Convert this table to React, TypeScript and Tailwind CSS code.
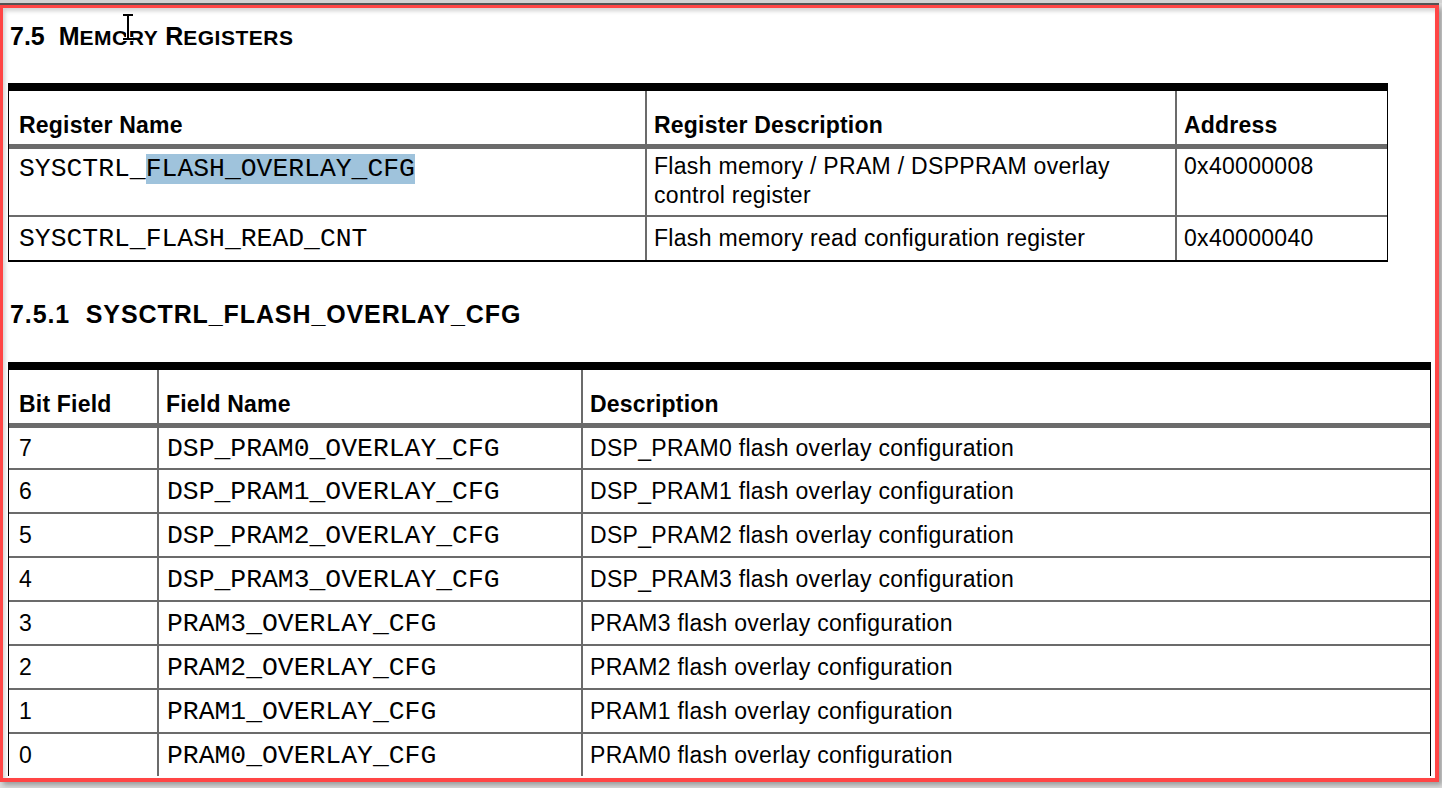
const sans = "font-['Liberation_Sans',Arial,sans-serif]";
const mono = "font-['Liberation_Mono','Courier_New',monospace]";

const regs = [
  {
    name: "SYSCTRL_",
    hl: "FLASH_OVERLAY_CFG",
    desc: ["Flash memory / PRAM / DSPPRAM overlay", "control register"],
    addr: "0x40000008",
  },
  {
    name: "SYSCTRL_FLASH_READ_CNT",
    hl: "",
    desc: ["Flash memory read configuration register"],
    addr: "0x40000040",
  },
];

const fields = [
  { bit: "7", name: "DSP_PRAM0_OVERLAY_CFG", desc: "DSP_PRAM0 flash overlay configuration" },
  { bit: "6", name: "DSP_PRAM1_OVERLAY_CFG", desc: "DSP_PRAM1 flash overlay configuration" },
  { bit: "5", name: "DSP_PRAM2_OVERLAY_CFG", desc: "DSP_PRAM2 flash overlay configuration" },
  { bit: "4", name: "DSP_PRAM3_OVERLAY_CFG", desc: "DSP_PRAM3 flash overlay configuration" },
  { bit: "3", name: "PRAM3_OVERLAY_CFG", desc: "PRAM3 flash overlay configuration" },
  { bit: "2", name: "PRAM2_OVERLAY_CFG", desc: "PRAM2 flash overlay configuration" },
  { bit: "1", name: "PRAM1_OVERLAY_CFG", desc: "PRAM1 flash overlay configuration" },
  { bit: "0", name: "PRAM0_OVERLAY_CFG", desc: "PRAM0 flash overlay configuration" },
];

const TextCursor = () => (
  <svg
    className="absolute left-[118px] top-[6px] z-20"
    width="14"
    height="28"
    viewBox="0 0 14 28"
  >
    <path d="M2 1h10M7 1v24M2 25h10" stroke="#fff" strokeWidth="4" fill="none" />
    <path d="M2 1h10M7 1v24M2 25h10" stroke="#000" strokeWidth="2" fill="none" />
  </svg>
);

export default function App() {
  return (
    <div className={`h-[788px] w-[1442px] overflow-hidden bg-[#dcdcdc] ${sans} text-black`}>
      <div className="h-[3px] bg-[#d2d2d2]" />
      <div className="h-[2px] w-[1439px] bg-[#555]" />
      <div className="relative h-[777px] w-[1439px] overflow-hidden border-t-[3px] border-l-[3px] border-r-[4px] border-b-[4px] border-[#ff4545] bg-white shadow-[3px_3px_5px_rgba(0,0,0,0.3)]">
        <div className="pointer-events-none absolute inset-0 z-10 shadow-[inset_2px_3px_4px_rgba(0,0,0,0.18)]" />
        <TextCursor />

        <div className="flex flex-col pl-[5px]">
          {/* section title */}
          <h1 className="mt-[13px] pl-[2px] text-[25px] font-bold leading-[30px]">
            7.5&nbsp;&nbsp;M<span className="text-[21px] tracking-[0.5px]">EMORY</span> R
            <span className="text-[21px] tracking-[0.5px]">EGISTERS</span>
          </h1>

          {/* register table */}
          <div className="mt-[30px] w-[1380px] border-x border-t-[8px] border-b-2 border-black">
            <div className="grid h-[58px] grid-cols-[636px_530px_212px] border-b-[5px] border-[#6b6b6b] text-[23px] font-bold leading-[26px] tracking-[0.2px]">
              <div className="pl-[10px] pt-[21px]">Register Name</div>
              <div className="border-l-2 border-[#6b6b6b] pl-[7px] pt-[21px]">Register Description</div>
              <div className="border-l-2 border-[#6b6b6b] pl-[7px] pt-[21px]">Address</div>
            </div>
            {regs.map((r, i) =>
              i === 0 ? (
                <div
                  key={r.addr}
                  className="grid h-[68px] grid-cols-[636px_530px_212px] border-b-2 border-[#6b6b6b] text-[23px] leading-[29px]"
                >
                  <div className={`${mono} pl-[10px] pt-[6px] text-[26.4px]`}>
                    {r.name}
                    <span className="bg-[#9fc3dc]">{r.hl}</span>
                  </div>
                  <div className="border-l-2 border-[#6b6b6b] pl-[7px] pt-[3px] tracking-[0.3px]">
                    {r.desc.map((d) => (
                      <div key={d}>{d}</div>
                    ))}
                  </div>
                  <div className="border-l-2 border-[#6b6b6b] pl-[7px] pt-[3px] tracking-[0.3px]">
                    {r.addr}
                  </div>
                </div>
              ) : (
                <div
                  key={r.addr}
                  className="grid h-[43px] grid-cols-[636px_530px_212px] text-[23px] leading-[29px]"
                >
                  <div className={`${mono} flex items-center pl-[10px] pt-[2px] text-[26.4px]`}>
                    {r.name}
                  </div>
                  <div className="flex items-center border-l-2 border-[#6b6b6b] pl-[7px] tracking-[0.3px]">
                    {r.desc[0]}
                  </div>
                  <div className="flex items-center border-l-2 border-[#6b6b6b] pl-[7px] tracking-[0.3px]">
                    {r.addr}
                  </div>
                </div>
              )
            )}
          </div>

          {/* sub-section title */}
          <h2 className="mt-[39px] pl-[2px] text-[25px] font-bold leading-[26px] tracking-[0.9px]">
            7.5.1&nbsp;&nbsp;SYSCTRL_FLASH_OVERLAY_CFG
          </h2>

          {/* field table */}
          <div className="mt-[35px] w-[1423px] border-x border-t-[8px] border-black">
            <div className="grid h-[58px] grid-cols-[148px_424px_849px] border-b-[5px] border-[#6b6b6b] text-[23px] font-bold leading-[26px] tracking-[0.2px]">
              <div className="pl-[10px] pt-[21px]">Bit Field</div>
              <div className="border-l-2 border-[#6b6b6b] pl-[7px] pt-[21px]">Field Name</div>
              <div className="border-l-2 border-[#6b6b6b] pl-[7px] pt-[21px]">Description</div>
            </div>
            {fields.map((f, i) => (
              <div
                key={f.bit}
                className={`grid grid-cols-[148px_424px_849px] border-[#6b6b6b] text-[23px] ${
                  i === 0 ? "h-[40px]" : "h-[44px] border-t-2"
                }`}
              >
                <div className="flex items-center pl-[10px] leading-[26px]">{f.bit}</div>
                <div className={`${mono} flex items-center border-l-2 border-[#6b6b6b] pl-[8px] pt-[3px] text-[26.4px] leading-[29px]`}>
                  {f.name}
                </div>
                <div className="flex items-center border-l-2 border-[#6b6b6b] pl-[7px] leading-[26px] tracking-[0.3px]">
                  {f.desc}
                </div>
              </div>
            ))}
          </div>
        </div>
      </div>
    </div>
  );
}
